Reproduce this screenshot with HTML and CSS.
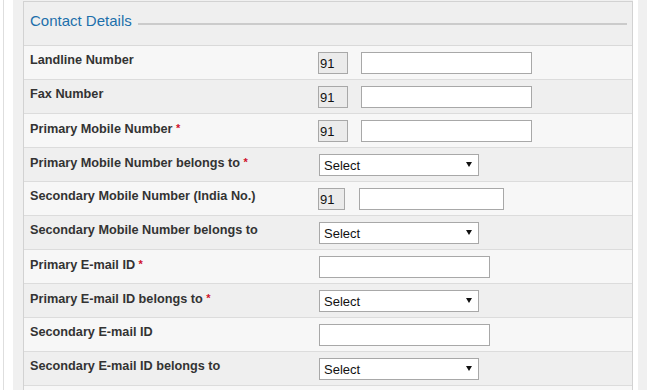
FILE: index.html
```html
<!DOCTYPE html>
<html>
<head>
<meta charset="utf-8">
<link rel="stylesheet" href="styles.css">
</head>
<body>
<div class="page">
  <div class="gutter">
    <div class="panel">
      <div class="head">
        <span class="title">Contact Details</span>
        <span class="rule"></span>
      </div>
      <div class="row light">
        <div class="label">Landline Number</div>
        <div class="ctrl"><span class="code">91</span><input class="txt" type="text"></div>
      </div>
      <div class="row dark">
        <div class="label">Fax Number</div>
        <div class="ctrl"><span class="code">91</span><input class="txt" type="text"></div>
      </div>
      <div class="row light">
        <div class="label">Primary Mobile Number <span class="req">*</span></div>
        <div class="ctrl"><span class="code">91</span><input class="txt" type="text"></div>
      </div>
      <div class="row dark">
        <div class="label">Primary Mobile Number belongs to <span class="req">*</span></div>
        <div class="ctrl"><span class="sel"><select><option>Select</option></select></span></div>
      </div>
      <div class="row light">
        <div class="label">Secondary Mobile Number (India No.)</div>
        <div class="ctrl"><span class="code code-sm">91</span><input class="txt txt-sm" type="text"></div>
      </div>
      <div class="row dark">
        <div class="label">Secondary Mobile Number belongs to</div>
        <div class="ctrl"><span class="sel"><select><option>Select</option></select></span></div>
      </div>
      <div class="row light">
        <div class="label">Primary E-mail ID <span class="req">*</span></div>
        <div class="ctrl"><input class="txt" type="text"></div>
      </div>
      <div class="row dark">
        <div class="label">Primary E-mail ID belongs to <span class="req">*</span></div>
        <div class="ctrl"><span class="sel"><select><option>Select</option></select></span></div>
      </div>
      <div class="row light">
        <div class="label">Secondary E-mail ID</div>
        <div class="ctrl"><input class="txt" type="text"></div>
      </div>
      <div class="row dark">
        <div class="label">Secondary E-mail ID belongs to</div>
        <div class="ctrl"><span class="sel"><select><option>Select</option></select></span></div>
      </div>
      <div class="row light">
        <div class="label"></div>
        <div class="ctrl"></div>
      </div>
    </div>
    <div class="strip"></div>
  </div>
</div>
</body>
</html>
```
FILE: styles.css
```css
html, body {
  margin: 0;
  padding: 0;
  background: #fff;
  overflow: hidden;
}
body {
  font-family: "Liberation Sans", Arial, sans-serif;
  color: #333;
}
.page {
  display: flex;
  height: 390px;
  margin-left: 3px;
  border-left: 1px solid #dedede;
  padding-left: 9px;
  overflow: hidden;
}
.gutter {
  flex: 1;
  display: flex;
  background: #f0f0f0;
  padding-left: 10px;
}
.panel {
  width: 608px;
  height: 389px;
  margin-top: 1px;
  border: 1px solid #d2d2d2;
  border-bottom: none;
  background: #f7f7f7;
  overflow: hidden;
}
.strip {
  width: 5px;
  background: #fff;
}
.head {
  height: 44px;
  box-sizing: border-box;
  padding: 10px 5px 0 6px;
  display: flex;
  align-items: flex-start;
  background: #efefef;
  border-bottom: 1px solid #d9d9d9;
}
.title {
  font-size: 15px;
  line-height: 17px;
  color: #1d6fab;
  white-space: nowrap;
}
.rule {
  flex: 1;
  height: 2px;
  margin: 11px 0 0 6px;
  background: #cbcbcb;
}
.row {
  display: grid;
  grid-template-columns: 295px 1fr;
  height: 33px;
  border-bottom: 1px solid #dcdcdc;
}
.light { background: #f7f7f7; }
.dark { background: #efefef; }
.label {
  padding: 7px 0 0 6px;
  font-size: 12.7px;
  line-height: 15px;
  font-weight: bold;
  color: #333;
}
.req {
  color: #d0102a;
  font-size: 11px;
  vertical-align: 1px;
}
.ctrl {
  padding-top: 6px;
  display: flex;
  align-items: flex-start;
}
.code {
  box-sizing: border-box;
  width: 30px;
  height: 22px;
  margin-left: -1px;
  margin-right: 13px;
  padding: 3px 0 0 1px;
  border: 1px solid #a8a8a8;
  background: #ebebeb;
  font-size: 13px;
  line-height: 15px;
  color: #111;
}
.code-sm {
  width: 27px;
  margin-right: 14px;
}
.txt {
  box-sizing: border-box;
  width: 171px;
  height: 22px;
  margin: 0;
  border: 1px solid #a8a8a8;
  background: #fff;
  padding: 0 3px;
  font: 13px "Liberation Sans", Arial, sans-serif;
}
.txt-sm {
  width: 145px;
}
.sel {
  position: relative;
  display: block;
  width: 160px;
  height: 22px;
}
.sel select {
  appearance: none;
  -webkit-appearance: none;
  box-sizing: border-box;
  width: 160px;
  height: 22px;
  margin: 0;
  border: 1px solid #a8a8a8;
  border-radius: 0;
  background: #fff;
  padding: 0 0 0 4px;
  font: 13px "Liberation Sans", Arial, sans-serif;
  color: #111;
}
.sel::after {
  content: "";
  position: absolute;
  left: 147px;
  top: 8px;
  border-left: 3px solid transparent;
  border-right: 3px solid transparent;
  border-top: 5px solid #111;
  pointer-events: none;
}
```
